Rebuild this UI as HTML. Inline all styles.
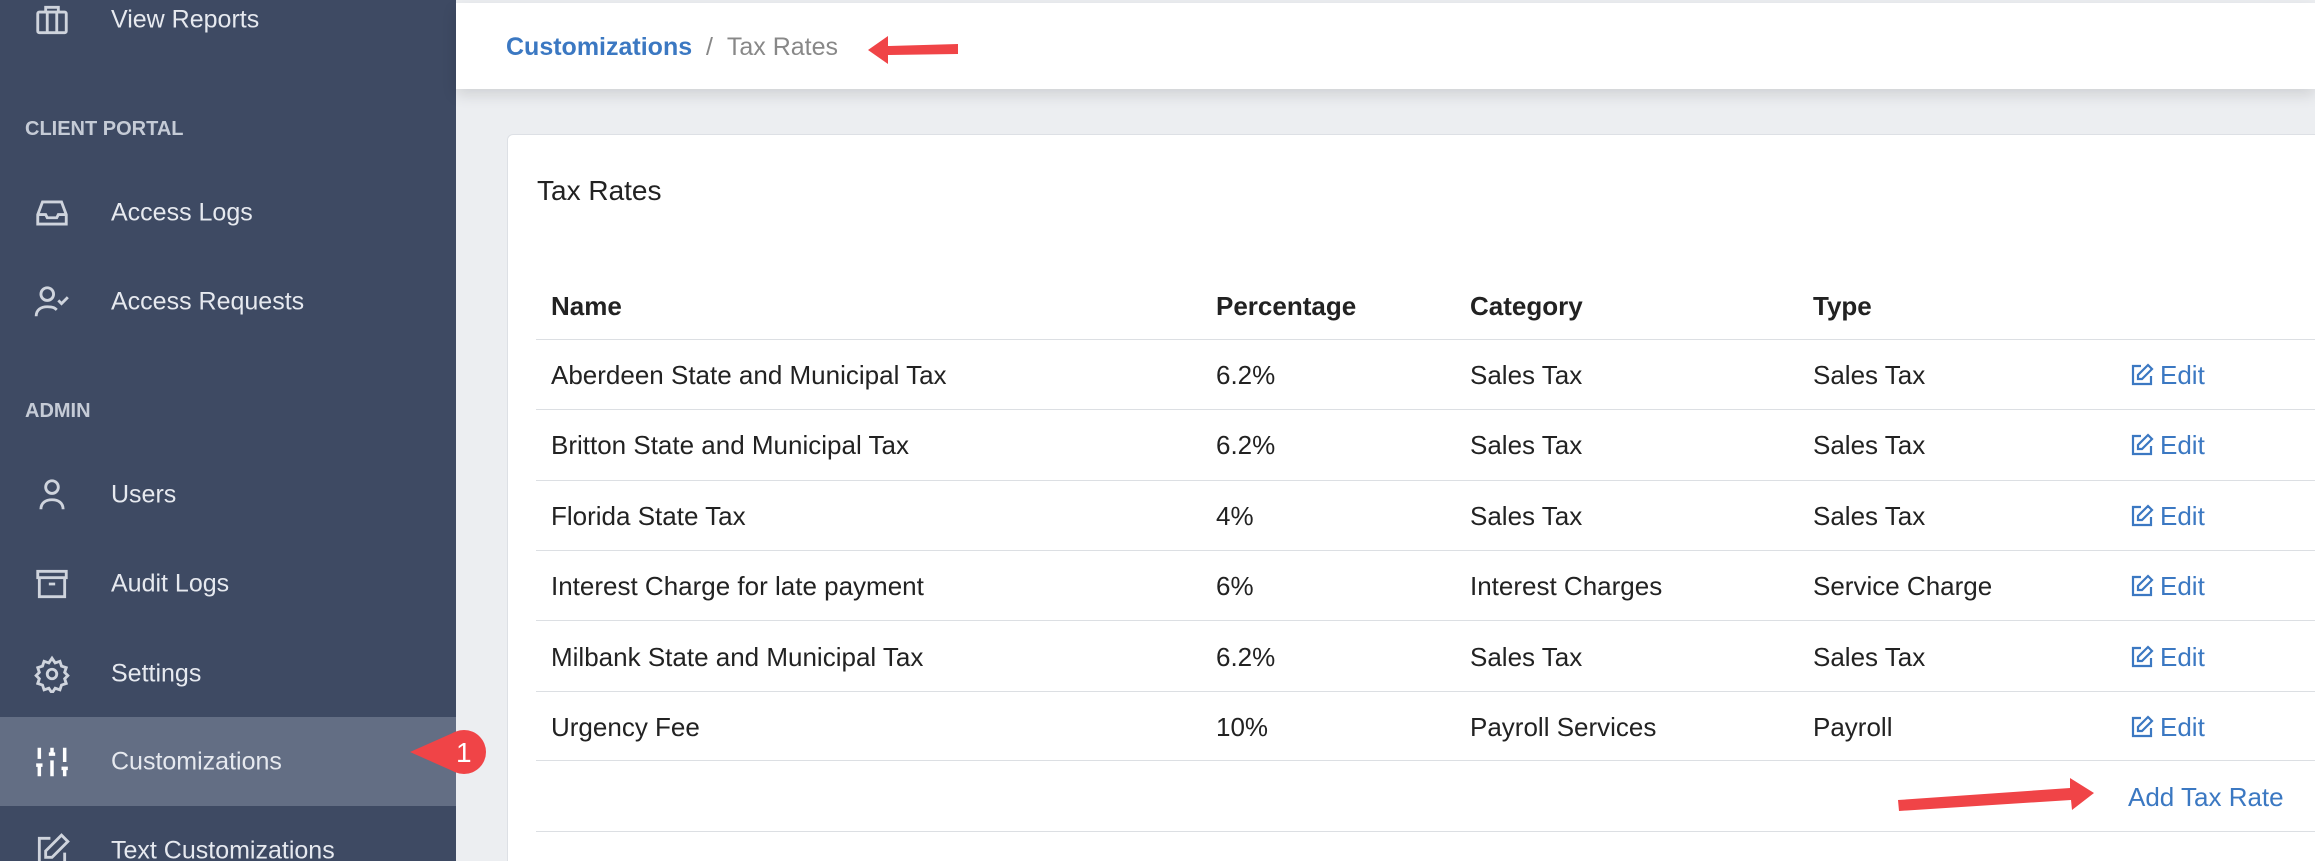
<!DOCTYPE html>
<html><head><meta charset="utf-8"><style>
*{margin:0;padding:0;box-sizing:border-box}
html,body{width:2315px;height:861px;overflow:hidden}
body{background:#eceef1;font-family:"Liberation Sans",sans-serif;position:relative}
#side{position:absolute;left:0;top:0;width:456px;height:861px;background:#3e4a63;color:#e6e9ef}
.it{position:absolute;left:0;width:456px;height:89px;font-size:25px}
.it span{position:absolute;left:111px;top:50%;transform:translateY(-50%)}
.it svg{position:absolute;left:33px;top:50%;transform:translateY(-50%)}
.sec{position:absolute;left:25px;font-size:20px;font-weight:bold;color:#c5cbd6}
.act{background:#636e84}
#head{position:absolute;left:456px;top:3px;width:1859px;height:86px;background:#fff;box-shadow:0 6px 14px rgba(0,0,0,.12)}
#head .bc{position:absolute;left:50px;top:30px;font-size:25px;color:#888}
#head .bc b{color:#3b78c2;font-weight:bold}
#card{position:absolute;left:507px;top:134px;width:1840px;height:727px;background:#fff;border:1px solid #dde0e5;border-bottom:none;border-radius:6px 6px 0 0}
.t{position:absolute;font-size:26px;color:#222}
.h{font-weight:bold}
.line{position:absolute;left:536px;width:1779px;height:1px;background:#dcdfe3}
.ed{position:absolute;left:2130px;color:#3b78c2;font-size:26px}
.ed svg{vertical-align:-3px;margin-right:6px}
</style></head><body>
<div id="side">
<div class="it" style="top:-25px"><svg width="38" height="38" viewBox="0 0 24 24" fill="none" stroke="#cfd4dd" stroke-width="1.8"><rect x="3" y="7" width="18" height="13" rx="1"/><path d="M8 7V4h8v3M9 7v13M15 7v13"/></svg><span>View Reports</span></div>
<div class="sec" style="top:118px">CLIENT PORTAL</div>
<div class="it" style="top:168px"><svg width="38" height="38" viewBox="0 0 24 24" fill="none" stroke="#cfd4dd" stroke-width="1.8"><path d="M3 13l3-8h12l3 8v6H3z"/><path d="M3 13h5l1 2h6l1-2h5"/></svg><span>Access Logs</span></div>
<div class="it" style="top:257px"><svg width="38" height="38" viewBox="0 0 24 24" fill="none" stroke="#cfd4dd" stroke-width="1.8"><circle cx="9" cy="7" r="4"/><path d="M2 21c0-4 3-6 7-6s5 1 6 2M16 11l2 2 4-4"/></svg><span>Access Requests</span></div>
<div class="sec" style="top:400px">ADMIN</div>
<div class="it" style="top:450px"><svg width="38" height="38" viewBox="0 0 24 24" fill="none" stroke="#cfd4dd" stroke-width="1.8"><circle cx="12" cy="7" r="4"/><path d="M5 21c0-4 3-6 7-6s7 2 7 6"/></svg><span>Users</span></div>
<div class="it" style="top:539px"><svg width="38" height="38" viewBox="0 0 24 24" fill="none" stroke="#cfd4dd" stroke-width="1.8"><rect x="3" y="4" width="18" height="4"/><path d="M4 8v12h16V8M10 12h4"/></svg><span>Audit Logs</span></div>
<div class="it" style="top:629px"><svg width="38" height="38" viewBox="0 0 24 24" fill="none" stroke="#cfd4dd" stroke-width="1.8"><circle cx="12" cy="12" r="3"/><path d="M12 2l2 3 3-1 1 3 3 1-1 3 2 2-2 2 1 3-3 1-1 3-3-1-2 3-2-3-3 1-1-3-3-1 1-3-2-2 2-2-1-3 3-1 1-3 3 1z"/></svg><span>Settings</span></div>
<div class="it act" style="top:717px"><svg width="38" height="38" viewBox="0 0 24 24" fill="none" stroke="#fff" stroke-width="2.2"><path d="M4 3v7M4 14v7M2 14h4M12 3v4M12 11v10M10 7h4M20 3v9M20 16v5M18 16h4"/></svg><span>Customizations</span></div>
<div class="it" style="top:806px"><svg width="38" height="38" viewBox="0 0 24 24" fill="none" stroke="#cfd4dd" stroke-width="1.8"><path d="M11 4H4v16h16v-7"/><path d="M18 2l4 4-10 10H8v-4z"/></svg><span>Text Customizations</span></div>
</div>
<div id="head"><div class="bc"><b>Customizations</b>&nbsp; / &nbsp;Tax Rates</div></div>
<div id="card"></div>
<div class="t" style="left:537px;top:175px;font-size:28px">Tax Rates</div>
<div class="t h" style="left:551px;top:291px">Name</div>
<div class="t h" style="left:1216px;top:291px">Percentage</div>
<div class="t h" style="left:1470px;top:291px">Category</div>
<div class="t h" style="left:1813px;top:291px">Type</div>
<div class="line" style="top:339px"></div>
<div class="t" style="left:551px;top:360px">Aberdeen State and Municipal Tax</div><div class="t" style="left:1216px;top:360px">6.2%</div><div class="t" style="left:1470px;top:360px">Sales Tax</div><div class="t" style="left:1813px;top:360px">Sales Tax</div>
<div class="line" style="top:409px"></div>
<div class="t" style="left:551px;top:430px">Britton State and Municipal Tax</div><div class="t" style="left:1216px;top:430px">6.2%</div><div class="t" style="left:1470px;top:430px">Sales Tax</div><div class="t" style="left:1813px;top:430px">Sales Tax</div>
<div class="line" style="top:480px"></div>
<div class="t" style="left:551px;top:501px">Florida State Tax</div><div class="t" style="left:1216px;top:501px">4%</div><div class="t" style="left:1470px;top:501px">Sales Tax</div><div class="t" style="left:1813px;top:501px">Sales Tax</div>
<div class="line" style="top:550px"></div>
<div class="t" style="left:551px;top:571px">Interest Charge for late payment</div><div class="t" style="left:1216px;top:571px">6%</div><div class="t" style="left:1470px;top:571px">Interest Charges</div><div class="t" style="left:1813px;top:571px">Service Charge</div>
<div class="line" style="top:620px"></div>
<div class="t" style="left:551px;top:642px">Milbank State and Municipal Tax</div><div class="t" style="left:1216px;top:642px">6.2%</div><div class="t" style="left:1470px;top:642px">Sales Tax</div><div class="t" style="left:1813px;top:642px">Sales Tax</div>
<div class="line" style="top:691px"></div>
<div class="t" style="left:551px;top:712px">Urgency Fee</div><div class="t" style="left:1216px;top:712px">10%</div><div class="t" style="left:1470px;top:712px">Payroll Services</div><div class="t" style="left:1813px;top:712px">Payroll</div>
<div class="line" style="top:760px"></div>
<div class="line" style="top:831px"></div>
<div class="ed" style="top:360px"><svg width="24" height="24" viewBox="0 0 24 24" fill="none" stroke="#3b78c2" stroke-width="2.2"><path d="M11 3H3v18h18v-8"/><path d="M18 2l4 4-10 10H8v-4z"/></svg>Edit</div>
<div class="ed" style="top:430px"><svg width="24" height="24" viewBox="0 0 24 24" fill="none" stroke="#3b78c2" stroke-width="2.2"><path d="M11 3H3v18h18v-8"/><path d="M18 2l4 4-10 10H8v-4z"/></svg>Edit</div>
<div class="ed" style="top:501px"><svg width="24" height="24" viewBox="0 0 24 24" fill="none" stroke="#3b78c2" stroke-width="2.2"><path d="M11 3H3v18h18v-8"/><path d="M18 2l4 4-10 10H8v-4z"/></svg>Edit</div>
<div class="ed" style="top:571px"><svg width="24" height="24" viewBox="0 0 24 24" fill="none" stroke="#3b78c2" stroke-width="2.2"><path d="M11 3H3v18h18v-8"/><path d="M18 2l4 4-10 10H8v-4z"/></svg>Edit</div>
<div class="ed" style="top:642px"><svg width="24" height="24" viewBox="0 0 24 24" fill="none" stroke="#3b78c2" stroke-width="2.2"><path d="M11 3H3v18h18v-8"/><path d="M18 2l4 4-10 10H8v-4z"/></svg>Edit</div>
<div class="ed" style="top:712px"><svg width="24" height="24" viewBox="0 0 24 24" fill="none" stroke="#3b78c2" stroke-width="2.2"><path d="M11 3H3v18h18v-8"/><path d="M18 2l4 4-10 10H8v-4z"/></svg>Edit</div>
<div class="ed" style="left:2128px;top:782px">Add Tax Rate</div>
<svg style="position:absolute;left:0;top:0" width="2315" height="861">
<g fill="#f04447" stroke="none">
<path d="M868 50 L888 36 L888 46 L958 44 L958 54 L888 55 L888 64 Z"/>
<path d="M2094 793 L2070 778 L2070 788 L1898 800 L1899 811 L2071 800 L2072 810 Z"/>
<circle cx="464" cy="752" r="22"/>
<path d="M410 752 L455 732 L455 772 Z"/>
</g>
<text x="456" y="762" font-size="28" fill="#fff" font-family="Liberation Sans">1</text>
</svg>
</body></html>
